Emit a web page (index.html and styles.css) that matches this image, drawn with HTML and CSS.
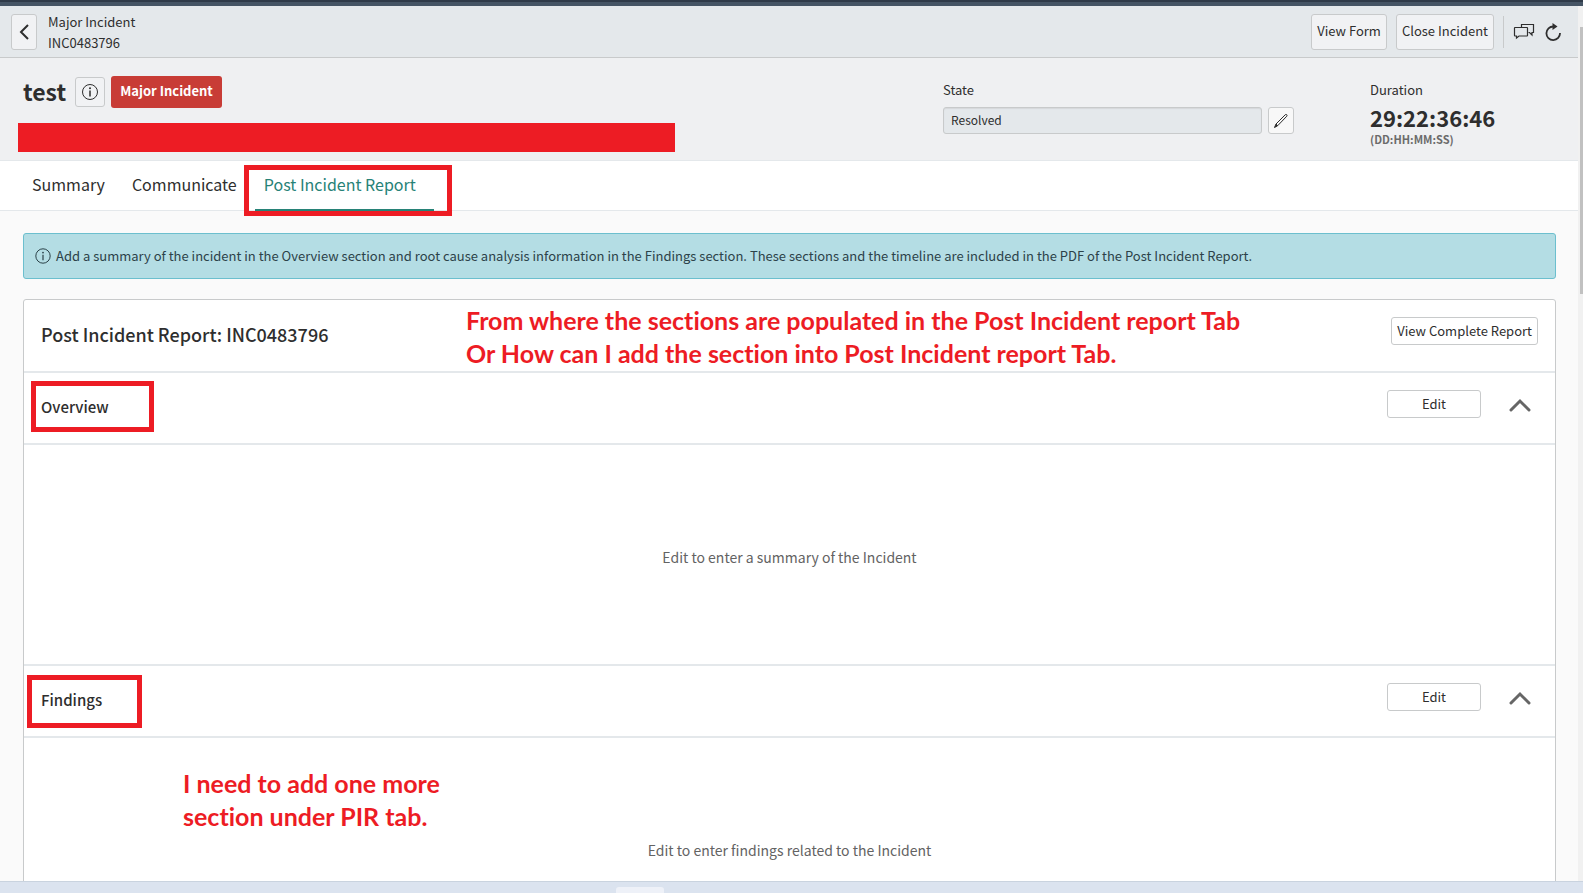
FILE: index.html
```html
<!DOCTYPE html>
<html lang="en">
<head>
<meta charset="utf-8">
<title>Major Incident INC0483796</title>
<link rel="stylesheet" href="styles.css">
</head>
<body>
<div class="chrome-edge"></div>
<div class="viewport">
  <div class="page">
    <header class="topbar">
      <button class="btn back" aria-label="Back">
        <svg width="10" height="16" viewBox="0 0 10 16"><path d="M9 1L2 8l7 7" fill="none" stroke="currentColor" stroke-width="2"/></svg>
      </button>
      <div class="record"><div>Major Incident</div><div>INC0483796</div></div>
      <div class="actions">
        <button class="btn tall">View Form</button>
        <button class="btn tall">Close Incident</button>
        <span class="rule"></span>
        <button class="icon-btn" aria-label="Discuss">
          <svg width="22" height="18" viewBox="0 0 22 18" fill="none" stroke="currentColor" stroke-width="1.200"><path d="M8.500 4V1.500h12v8H19v2.500L16.500 9.500H15.500"/><path d="M2 4.500h12q.500 0 .500.500v7.500q0 .500-.500.500H6l-2.500 2V13H2q-.500 0-.500-.500V5q0-.500.500-.500z"/></svg>
        </button>
        <button class="icon-btn" aria-label="Refresh">
          <svg width="18" height="18" viewBox="0 0 18 18"><path d="M9.500 3.500A6.800 6.800 0 1 0 16 10" fill="none" stroke="currentColor" stroke-width="1.800"/><path d="M8.500 0l5 3.500-5 3.500z" fill="currentColor"/></svg>
        </button>
      </div>
    </header>

    <section class="summary">
      <div class="identity">
        <h1>test</h1>
        <button class="btn info" aria-label="Information">
          <svg width="18" height="18" viewBox="0 0 18 18"><circle cx="9" cy="9" r="7.500" fill="none" stroke="currentColor"/><circle cx="9" cy="5.300" r="1" fill="currentColor"/><path d="M9 7.500v6" stroke="currentColor" stroke-width="1.500"/></svg>
        </button>
        <span class="badge">Major Incident</span>
        <div class="redaction"></div>
      </div>
      <div class="state">
        <label for="state">State</label>
        <div class="field">
          <input id="state" type="text" value="Resolved" readonly>
          <button class="btn edit-state" aria-label="Edit state">
            <svg width="16" height="16" viewBox="0 0 16 16" fill="none" stroke="currentColor" stroke-width="1"><path d="M3 11L12.300 1.700q.700-.600 1.400 0t.100 1.500L4.700 12.700z"/><path d="M3 11l-1.500 3.500L4.700 12.700" fill="currentColor"/></svg>
          </button>
        </div>
      </div>
      <div class="duration">
        <div class="label">Duration</div>
        <div class="clock">29:22:36:46</div>
        <div class="units">(DD:HH:MM:SS)</div>
      </div>
    </section>

    <nav class="tabs">
      <a href="#summary">Summary</a>
      <a href="#communicate">Communicate</a>
      <a href="#report" class="active" aria-current="page">Post Incident Report<span class="mark mark-tab"></span></a>
    </nav>

    <main>
      <div class="alert">
        <svg width="16" height="16" viewBox="0 0 16 16"><circle cx="8" cy="8" r="7.200" fill="none" stroke="currentColor"/><circle cx="8" cy="4.600" r=".9" fill="currentColor"/><path d="M8 6.800v5.400" stroke="currentColor" stroke-width="1.200"/></svg>
        <span>Add a summary of the incident in the Overview section and root cause analysis information in the Findings section. These sections and the timeline are included in the PDF of the Post Incident Report.</span>
      </div>

      <article class="card">
        <div class="row title-row">
          <h2>Post Incident Report: INC0483796</h2>
          <button class="btn plain">View Complete Report</button>
          <p class="note note-top">From where the sections are populated in the Post Incident report Tab<br>Or How can I add the section into Post Incident report Tab.</p>
        </div>
        <div class="row">
          <h3>Overview</h3><span class="mark mark-overview"></span>
          <button class="btn plain edit">Edit</button>
          <button class="icon-btn chevron" aria-label="Collapse Overview"><svg width="22" height="14" viewBox="0 0 22 14"><path d="M2 12l9-9 9 9" fill="none" stroke="currentColor" stroke-width="3" stroke-linecap="round"/></svg></button>
        </div>
        <div class="body">Edit to enter a summary of the Incident</div>
        <div class="row">
          <h3>Findings</h3><span class="mark mark-findings"></span>
          <button class="btn plain edit">Edit</button>
          <button class="icon-btn chevron" aria-label="Collapse Findings"><svg width="22" height="14" viewBox="0 0 22 14"><path d="M2 12l9-9 9 9" fill="none" stroke="currentColor" stroke-width="3" stroke-linecap="round"/></svg></button>
        </div>
        <div class="body">Edit to enter findings related to the Incident
          <p class="note note-bottom">I need to add one more<br>section under PIR tab.</p>
        </div>
      </article>
    </main>
  </div>
  <div class="scrollbar"><div class="thumb"></div></div>
</div>
<footer class="taskbar"><div class="task"></div></footer>
</body>
</html>
```
FILE: styles.css
```css
* { box-sizing: border-box; }
body {
  margin: 0;
  height: 100vh;
  display: flex;
  flex-direction: column;
  overflow: hidden;
  background: #fafafa;
  color: #2e2e2e;
  font: 13px/20px "Noto Sans CJK SC", "Noto Sans", sans-serif;
}
h1, h2, h3, p { margin: 0; }
svg { display: block; }
.chrome-edge { flex: none; height: 6px; background: #455464; border-top: 2px solid #2f3a48; }
.viewport { flex: 1; min-height: 0; display: flex; overflow: hidden; }
.page { flex: 1; min-width: 0; }
.scrollbar { width: 5px; padding: 21px 0 0 2px; background: #f1f1f1; }
.thumb { height: 267px; background: #c1c1c1; }

.btn {
  display: flex;
  align-items: center;
  justify-content: center;
  padding: 0 5px 1px;
  border: 1px solid #c8cacb;
  border-radius: 3px;
  background: #f1f2f4;
  color: #2e2e2e;
  font: inherit;
  white-space: nowrap;
}
.icon-btn { padding: 0; border: 0; background: none; color: #2e2e2e; }
.plain { height: 28px; background: #fff; }

.topbar {
  display: flex;
  align-items: center;
  height: 52px;
  padding: 0 16px 0 11px;
  background: #e4e8eb;
  border-bottom: 1px solid #c8cacb;
}
.back { width: 26px; height: 36px; padding: 0; }
.record { margin-left: 11px; line-height: 21px; }
.actions { margin-left: auto; display: flex; align-items: center; gap: 9px; }
.tall { height: 36px; padding-bottom: 2px; }
.rule { width: 1px; height: 32px; background: #c8cacb; }

.summary {
  display: grid;
  grid-template-columns: 920fr 427fr 208fr;
  height: 103px;
  padding: 18px 0 0 23px;
  background: #eff0f2;
  border-bottom: 1px solid #e4e8eb;
}
.identity { position: relative; display: flex; align-items: center; height: 32px; }
h1 { padding-bottom: 2px; font-size: 23px; line-height: 30px; }
.info { width: 30px; height: 30px; margin: 0 6px 0 9px; padding: 0; }
.badge { height: 32px; padding: 0 9px; border-radius: 3px; background: #c83c36; color: #fff; font-weight: 700; line-height: 30px; }
.redaction { position: absolute; left: -5px; top: 47px; width: 657px; height: 29px; background: #ed1c24; }
.state label, .label { display: block; padding-top: 4px; line-height: 20px; }
.field { display: flex; gap: 6px; margin-top: 7px; }
.field input {
  width: 319px;
  height: 27px;
  padding: 0 7px 2px;
  border: 1px solid #c8cacb;
  border-radius: 3px;
  background: #e4e8eb;
  box-shadow: inset 0 1px 1px #d5d8db;
  color: #2e2e2e;
  font: inherit;
  font-size: 12px;
}
.edit-state { width: 26px; height: 27px; padding: 0; background: #f8f8f8; }
.clock { font-size: 22px; font-weight: 700; line-height: 34px; }
.units { color: #6b6b6b; font-size: 11px; font-weight: 700; line-height: 10px; }

.tabs { display: flex; height: 50px; padding-left: 23px; background: #fff; border-bottom: 1px solid #e4e8eb; }
.tabs a { position: relative; margin-bottom: -1px; padding: 11px 18px 0 9px; color: #2e2e2e; font-size: 16px; line-height: 24px; text-decoration: none; }
.tabs .active { color: #278277; border-bottom: 2px solid #278277; }

main { padding: 22px 22px 0 23px; }
.alert {
  display: flex;
  align-items: center;
  gap: 5px;
  min-height: 46px;
  padding: 0 11px;
  border: 1px solid #6cbfce;
  border-radius: 3px;
  background: #b4dde4;
  color: #2c4249;
}
.card { margin-top: 20px; border: 1px solid #c8cacb; border-radius: 3px; background: #fff; }
.row {
  position: relative;
  display: flex;
  align-items: flex-start;
  height: 72px;
  padding: 17px 24px 0 17px;
  border-bottom: 2px solid #e4e8eb;
}
.title-row { height: 73px; }
.title-row .btn { margin-right: -7px; }
h2 { margin-right: auto; font-size: 18px; font-weight: 500; line-height: 34px; }
h3 { margin-right: auto; font-size: 15px; font-weight: 500; line-height: 34px; }
.edit { width: 94px; }
.chevron { margin: 8px 0 0 28px; color: #666; }
.body { position: relative; height: 221px; padding-top: 102px; border-bottom: 2px solid #e4e8eb; color: #636363; font-size: 14px; text-align: center; }

.mark { position: absolute; border: 5px solid #ed1c24; }
.mark-tab { left: -11px; top: 4px; width: 208px; height: 51px; }
.mark-overview { left: 7px; top: 8px; width: 123px; height: 51px; }
.mark-findings { left: 3px; top: 9px; width: 115px; height: 53px; }
.note { position: absolute; color: #ed1c24; font: 700 25px/33px Lato, sans-serif; font-variant-ligatures: none; text-align: left; white-space: nowrap; }
.note-top { left: 442px; top: 4px; }
.note-bottom { left: 159px; top: 29px; }

.taskbar { flex: none; height: 12px; padding: 5px 0 0 616px; background: #dbe3ef; border-top: 1px solid #c9d3df; }
.task { width: 48px; height: 6px; border-radius: 3px 3px 0 0; background: #eef1f8; }
```
